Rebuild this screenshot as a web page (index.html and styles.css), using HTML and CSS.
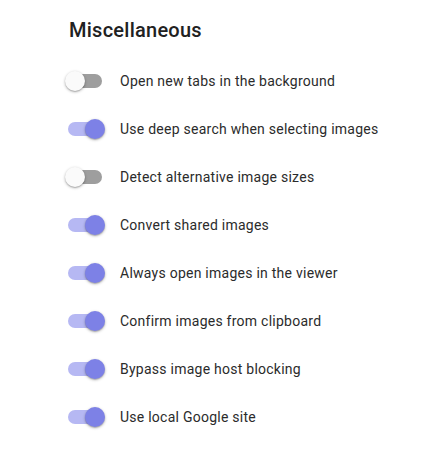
FILE: index.html
```html
<!DOCTYPE html>
<html>
<head>
<meta charset="utf-8">
<link rel="stylesheet" href="styles.css">
</head>
<body>
<div class="panel">
  <h2 class="title">Miscellaneous</h2>
  <div class="row"><span class="switch"><span class="track"></span><span class="thumb"></span></span><span class="label">Open new tabs in the background</span></div>
  <div class="row"><span class="switch on"><span class="track"></span><span class="thumb"></span></span><span class="label">Use deep search when selecting images</span></div>
  <div class="row"><span class="switch"><span class="track"></span><span class="thumb"></span></span><span class="label">Detect alternative image sizes</span></div>
  <div class="row"><span class="switch on"><span class="track"></span><span class="thumb"></span></span><span class="label">Convert shared images</span></div>
  <div class="row"><span class="switch on"><span class="track"></span><span class="thumb"></span></span><span class="label">Always open images in the viewer</span></div>
  <div class="row"><span class="switch on"><span class="track"></span><span class="thumb"></span></span><span class="label">Confirm images from clipboard</span></div>
  <div class="row"><span class="switch on"><span class="track"></span><span class="thumb"></span></span><span class="label">Bypass image host blocking</span></div>
  <div class="row"><span class="switch on"><span class="track"></span><span class="thumb"></span></span><span class="label">Use local Google site</span></div>
</div>
</body>
</html>
```
FILE: styles.css
```css
html, body {
  margin: 0;
  padding: 0;
  background: #ffffff;
}
body {
  font-family: Roboto, "Noto Sans", sans-serif;
  color: #212121;
}
.panel {
  padding: 16px 0 0 65px;
}
.title {
  margin: 0 0 0 4px;
  font-size: 20px;
  font-weight: 500;
  letter-spacing: 0.0125em;
  line-height: 28px;
  height: 28px;
  color: #212121;
}
.row {
  display: flex;
  align-items: center;
  height: 48px;
  gap: 15px;
}
.title + .row {
  margin-top: 13px;
}
.switch {
  display: grid;
  width: 40px;
  height: 20px;
  align-items: center;
  flex: none;
}
.track, .thumb {
  grid-area: 1 / 1;
}
.track {
  width: 34px;
  height: 14px;
  margin-left: 3px;
  border-radius: 7px;
  background: #9e9e9e;
}
.thumb {
  width: 20px;
  height: 20px;
  border-radius: 50%;
  background: #fafafa;
  justify-self: start;
  box-shadow: 0 1px 3px rgba(0,0,0,0.3), 0 1px 1px rgba(0,0,0,0.14);
}
.switch.on .track {
  background: #b6b8f3;
}
.switch.on .thumb {
  justify-self: end;
  background: #7d81e6;
}
.label {
  font-size: 14px;
  line-height: 20px;
  letter-spacing: 0.0178571em;
  color: #2b2b2b;
}
```
